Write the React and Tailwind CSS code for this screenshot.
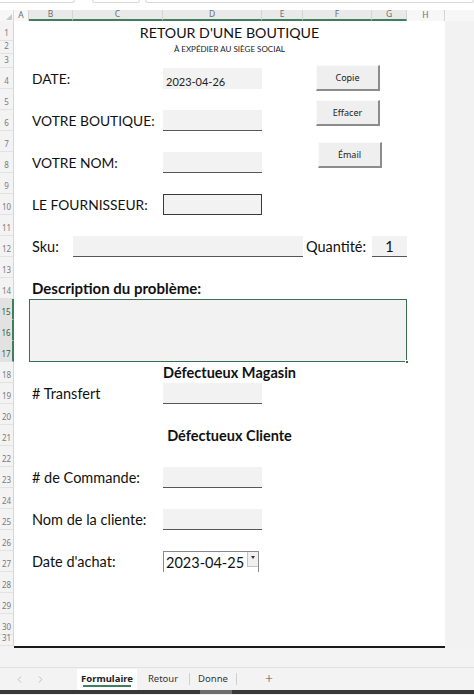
import { ChevronLeft, ChevronRight } from 'lucide-react';

const COLS = [
  { id: 'A', w: 'w-[15px]', sel: false },
  { id: 'B', w: 'w-[44px]', sel: true },
  { id: 'C', w: 'w-[90px]', sel: true },
  { id: 'D', w: 'w-[99px]', sel: true },
  { id: 'E', w: 'w-[41px]', sel: true },
  { id: 'F', w: 'w-[69px]', sel: true },
  { id: 'G', w: 'w-[35px]', sel: true },
  { id: 'H', w: 'w-[38px]', sel: false },
];

const ROWS = Array.from({ length: 31 }, (_, i) => i + 1);
const SELECTED_ROWS = [15, 16, 17];

const LABEL = 'flex items-end pb-[3px] pl-[3px] text-[14.5px] leading-none text-[#111] whitespace-nowrap';
const CAPS = 'flex items-end pb-[3px] pl-[3px] text-[13.8px] leading-none text-[#111] whitespace-nowrap';
const FIELD = 'bg-[#f2f2f2] border-b-[1.5px] border-[#575757]';

function ExcelButton({ className, children }) {
  return (
    <div
      className={`absolute flex items-center justify-center bg-[#efefef] border-t border-l border-t-[#fafafa] border-l-[#fafafa] border-r-2 border-b-2 border-r-[#8c8c8c] border-b-[#8c8c8c] text-[9px] text-[#222] font-['Noto_Sans',sans-serif] ${className}`}
    >
      {children}
    </div>
  );
}

export default function App() {
  return (
    <div className="relative w-[474px] h-[695px] overflow-hidden bg-[#f3f3f3] font-['Lato','Noto_Sans',sans-serif]">
      {/* formula bar remnants */}
      <div className="flex h-[10px] bg-white gap-[17px]">
        <div className="w-[75px] h-[3px] border-b border-r border-[#d9d9d9] rounded-br-sm" />
        <div className="flex gap-[5px]">
          <div className="w-[48px] h-[3px] border border-t-0 border-[#d9d9d9] rounded-b-sm" />
          <div className="w-[329px] h-[3px] border border-t-0 border-[#d9d9d9] rounded-b-sm" />
        </div>
      </div>

      {/* column headers */}
      <div className="flex h-[11px] font-['Noto_Sans',sans-serif] text-[8.5px] text-[#6f6f6f]">
        <div className="relative w-[14px] bg-[#f7f7f7] border-r border-[#dadada]">
          <div className="absolute right-[1px] bottom-[1px] w-0 h-0 border-l-[6px] border-l-transparent border-b-[6px] border-b-[#c8c8c8]" />
        </div>
        {COLS.map(c => (
          <div
            key={c.id}
            className={`${c.w} flex items-center justify-center leading-none border-r border-[#d4d4d4]
              ${c.sel ? 'bg-[#e9e9e9] border-b-2 border-b-[#3f7f5c]' : 'bg-[#f7f7f7]'}`}
          >
            {c.id}
          </div>
        ))}
        <div className="flex-1 bg-[#f7f7f7]" />
      </div>

      {/* sheet */}
      <div className="flex">
        <div className="w-[14px] grid grid-rows-[20px_13px_14px_repeat(27,21px)_11px] bg-[#f3f3f3] font-['Noto_Sans',sans-serif] text-[8px] leading-none">
          {ROWS.map(r => {
            const sel = SELECTED_ROWS.includes(r);
            return (
              <div
                key={r}
                className={`flex items-end justify-center pb-[3px] border-b border-[#e2e2e2]
                  ${sel ? 'bg-[#e2e2e2] border-r-2 border-r-[#3f7f5c] text-[#2f5f45]' : 'border-r border-r-[#d6d6d6] text-[#7a7a7a]'}`}
              >
                {r}
              </div>
            );
          })}
        </div>

        <div className="relative w-[431px] bg-white border-b-2 border-[#1a1a1a] grid grid-cols-[15px_44px_90px_99px_41px_69px_35px_38px] grid-rows-[20px_13px_14px_repeat(27,21px)_11px]">
          <div className="row-start-1 col-start-1 col-span-8 flex items-end justify-center text-[14.2px] leading-none text-[#111] pb-[1px]">
            RETOUR D'UNE BOUTIQUE
          </div>
          <div className="row-start-2 col-start-1 col-span-8 flex items-end justify-center pb-[1px] text-[8px] leading-none text-[#222]">
            À EXPÉDIER AU SIÈGE SOCIAL
          </div>

          <div className={`row-start-4 col-start-2 col-span-2 ${CAPS}`}>DATE:</div>
          <div className="row-start-4 col-start-4 bg-[#f2f2f2] flex items-end pb-[2px] pl-[3px] text-[11px] leading-none text-[#222]">
            2023-04-26
          </div>

          <div className={`row-start-6 col-start-2 col-span-2 ${CAPS}`}>VOTRE BOUTIQUE:</div>
          <div className={`row-start-6 col-start-4 ${FIELD}`} />

          <div className={`row-start-8 col-start-2 col-span-2 ${CAPS}`}>VOTRE NOM:</div>
          <div className={`row-start-8 col-start-4 ${FIELD}`} />

          <div className={`row-start-10 col-start-2 col-span-2 ${CAPS}`}>LE FOURNISSEUR:</div>
          <div className="row-start-10 col-start-4 bg-[#f2f2f2] border border-[#3a3a3a]" />

          <div className={`row-start-12 col-start-2 ${LABEL}`}>Sku:</div>
          <div className={`row-start-12 col-start-3 col-span-3 ${FIELD}`} />
          <div className={`row-start-12 col-start-6 ${LABEL}`}>Quantité:</div>
          <div className={`row-start-12 col-start-7 ${FIELD} flex items-end justify-center pb-[2px] text-[14.5px] leading-none text-[#111]`}>
            1
          </div>

          <div className={`row-start-14 col-start-2 col-span-6 ${LABEL} font-bold text-[15px]`}>Description du problème:</div>
          <div className="relative row-start-15 row-span-3 col-start-2 col-span-6 bg-[#f2f2f2] border-[1.5px] border-[#3a6e52]">
            <div className="absolute -right-[3px] -bottom-[3px] w-[4px] h-[4px] bg-[#2f6e4c] border border-white" />
          </div>

          <div className="row-start-18 col-start-1 col-span-8 flex items-end justify-center pb-[3px] text-[14.5px] leading-none font-bold text-[#111]">
            Défectueux Magasin
          </div>
          <div className={`row-start-19 col-start-2 col-span-2 ${LABEL}`}># Transfert</div>
          <div className={`row-start-19 col-start-4 ${FIELD}`} />

          <div className="row-start-21 col-start-1 col-span-8 flex items-end justify-center pb-[3px] text-[14.5px] leading-none font-bold text-[#111]">
            Défectueux Cliente
          </div>

          <div className={`row-start-23 col-start-2 col-span-2 ${LABEL}`}># de Commande:</div>
          <div className={`row-start-23 col-start-4 ${FIELD}`} />

          <div className={`row-start-25 col-start-2 col-span-2 ${LABEL}`}>Nom de la cliente:</div>
          <div className={`row-start-25 col-start-4 ${FIELD}`} />

          <div className={`row-start-27 col-start-2 col-span-2 ${LABEL}`}>Date d'achat:</div>
          <div className="row-start-27 col-start-4 mr-[3px] flex bg-white border border-b-0 border-[#8a8a8a]">
            <div className="flex-1 flex items-end pb-[2px] pl-[2px] text-[14.5px] leading-none text-[#111]">2023-04-25</div>
            <div className="w-[11px] h-[15px] flex items-start justify-center pt-[4px] bg-[#f0f0f0] border-l border-b border-[#c4c4c4]">
              <div className="w-0 h-0 border-l-[2.5px] border-r-[2.5px] border-t-[3px] border-l-transparent border-r-transparent border-t-[#333]" />
            </div>
          </div>

          <ExcelButton className="left-[302px] top-[44px] w-[64px] h-[26px]">Copie</ExcelButton>
          <ExcelButton className="left-[302px] top-[79px] w-[64px] h-[26px]">Effacer</ExcelButton>
          <ExcelButton className="left-[304px] top-[121px] w-[64px] h-[26px]">Émail</ExcelButton>
        </div>

        <div className="flex-1 bg-[#f2f2f2]" />
      </div>

      {/* sheet tabs */}
      <div className="h-[19px]" />
      <div className="flex items-center h-[23px] border-t border-[#e0e0e0] font-['Noto_Sans',sans-serif] text-[9.5px] text-[#333]">
        <div className="flex items-center gap-[10px] pl-[14px] w-[77px] text-[#a8a8a8]">
          <ChevronLeft size={11} strokeWidth={1.5} />
          <ChevronRight size={11} strokeWidth={1.5} />
        </div>
        <div className="flex flex-col items-center justify-center w-[60px] h-[21px] bg-white font-bold text-[#222]">
          <span className="leading-none pt-[2px]">Formulaire</span>
          <span className="mt-[2px] w-[48px] h-[1.5px] bg-[#3f7f5c]" />
        </div>
        <div className="w-[52px] flex justify-center leading-none">Retour</div>
        <div className="w-px h-[12px] bg-[#cfcfcf]" />
        <div className="w-[46px] flex justify-center leading-none">Donne</div>
        <div className="w-px h-[12px] bg-[#cfcfcf]" />
        <div className="pl-[28px] text-[14px] leading-none text-[#555] font-light">+</div>
      </div>
      <div className="flex h-[4px] bg-[#383838]">
        <div className="w-[200px]" />
        <div className="w-[32px] bg-[#6e6e6e]" />
      </div>
    </div>
  );
}
